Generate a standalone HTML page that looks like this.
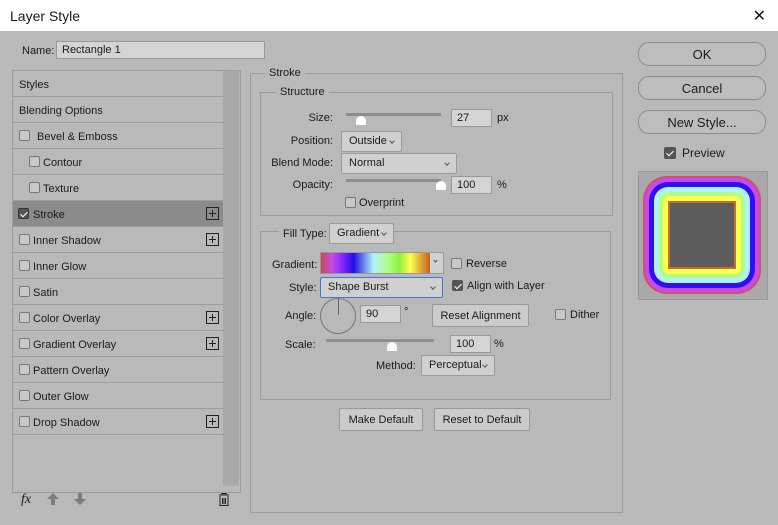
<!DOCTYPE html>
<html><head><style>
*{box-sizing:border-box;margin:0;padding:0}
body{width:778px;height:525px;background:#b9b9b9;font-family:"Liberation Sans",sans-serif;font-size:11px;color:#1a1a1a;position:relative;overflow:hidden}
.a{position:absolute}
.title{left:0;top:0;width:778px;height:31px;background:#fff;font-size:14px;padding:8px 0 0 10px}
.inp{background:#d4d4d4;border:1px solid #999;padding:2px 5px;height:18px}
.dd{background:#d0d0d0;border:1px solid #9a9a9a;border-radius:2px;padding:3px 7px;height:21px}
.dd:after{content:"";position:absolute;right:7px;top:7px;width:3px;height:3px;border-right:1px solid #555;border-bottom:1px solid #555;transform:rotate(45deg)}
.cb{width:11px;height:11px;border:1px solid #777;border-radius:2px;background:#c8c8c8}
.cbc{background:#555;border-color:#555}
.cbc:after{content:"";position:absolute;left:3px;top:1px;width:3px;height:6px;border-right:1.5px solid #fff;border-bottom:1.5px solid #fff;transform:rotate(45deg)}
.item{left:13px;width:210px;height:26px;border-bottom:1px solid #9e9e9e;padding:8px 0 0 6px}
.plus{right:4px;top:6px;width:13px;height:13px;border:1px solid #222}
.plus:before{content:"";position:absolute;left:2px;top:5px;width:7px;height:1px;background:#222}
.plus:after{content:"";position:absolute;left:5px;top:2px;width:1px;height:7px;background:#222}
.grp{border:1px solid #9c9c9c}
.lg{background:#b9b9b9;padding:0 4px}
.btn{background:#cbcbcb;border:1px solid #999;border-radius:2px;text-align:center;padding-top:5px;height:23px}
.rb{border:1px solid #8a8a8a;border-radius:11px;text-align:center;font-size:13px;padding-top:4px;height:24px;width:128px;left:638px;background:#bdbdbd}
.sl{height:3px;background:#8e8e8e}
.th{width:10px;height:9px;background:#fff;border-radius:5px 5px 1px 1px}
.r{text-align:right}
</style></head><body>
<div class="a title">Layer Style</div>
<div class="a" style="right:12px;top:6px;font-size:16px">✕</div>
<div class="a" style="left:22px;top:45px">Name:</div>
<div class="a inp" style="left:56px;top:41px;width:209px">Rectangle 1</div>

<div class="a grp" style="left:12px;top:70px;width:229px;height:423px"></div>
<div class="a" style="left:223px;top:71px;width:16px;height:415px;background:#a9a9a9"></div>
<div class="a item" style="top:71px">Styles</div>
<div class="a item" style="top:97px">Blending Options</div>
<div class="a item" style="top:123px;padding-left:24px"><div class="a cb" style="left:6px;top:7px"></div>Bevel &amp; Emboss</div>
<div class="a item" style="top:149px;padding-left:30px"><div class="a cb" style="left:16px;top:7px"></div>Contour</div>
<div class="a item" style="top:175px;padding-left:30px"><div class="a cb" style="left:16px;top:7px"></div>Texture</div>
<div class="a item" style="top:201px;padding-left:20px;background:#8b8b8b"><div class="a cb cbc" style="left:5px;top:7px;border-color:#333"></div>Stroke<div class="a plus"></div></div>
<div class="a item" style="top:227px;padding-left:20px"><div class="a cb" style="left:6px;top:7px"></div>Inner Shadow<div class="a plus"></div></div>
<div class="a item" style="top:253px;padding-left:20px"><div class="a cb" style="left:6px;top:7px"></div>Inner Glow</div>
<div class="a item" style="top:279px;padding-left:20px"><div class="a cb" style="left:6px;top:7px"></div>Satin</div>
<div class="a item" style="top:305px;padding-left:20px"><div class="a cb" style="left:6px;top:7px"></div>Color Overlay<div class="a plus"></div></div>
<div class="a item" style="top:331px;padding-left:20px"><div class="a cb" style="left:6px;top:7px"></div>Gradient Overlay<div class="a plus"></div></div>
<div class="a item" style="top:357px;padding-left:20px"><div class="a cb" style="left:6px;top:7px"></div>Pattern Overlay</div>
<div class="a item" style="top:383px;padding-left:20px"><div class="a cb" style="left:6px;top:7px"></div>Outer Glow</div>
<div class="a item" style="top:409px;padding-left:20px"><div class="a cb" style="left:6px;top:7px"></div>Drop Shadow<div class="a plus"></div></div>
<div class="a" style="left:21px;top:492px;font-size:14px;font-style:italic;font-family:'Liberation Serif',serif">fx</div>
<svg class="a" style="left:47px;top:493px" width="12" height="12"><path d="M6 0L12 6H8V12H4V6H0Z" fill="#7d7d7d"/></svg>
<svg class="a" style="left:74px;top:493px" width="12" height="12"><path d="M6 12L12 6H8V0H4V6H0Z" fill="#7d7d7d"/></svg>
<svg class="a" style="left:218px;top:493px" width="12" height="13"><path d="M1 2H11M4 2V0.5H8V2M2 3V12.5H10V3M4.5 5V11M6 5V11M7.5 5V11" stroke="#222" fill="none"/></svg>

<div class="a grp" style="left:250px;top:73px;width:373px;height:440px"></div>
<div class="a lg" style="left:265px;top:67px">Stroke</div>
<div class="a grp" style="left:260px;top:92px;width:353px;height:124px"></div>
<div class="a lg" style="left:276px;top:86px">Structure</div>
<div class="a r" style="left:300px;top:112px;width:33px">Size:</div>
<div class="a sl" style="left:346px;top:113px;width:95px"></div>
<div class="a th" style="left:356px;top:116px"></div>
<div class="a inp" style="left:451px;top:109px;width:41px">27</div>
<div class="a" style="left:497px;top:112px">px</div>
<div class="a r" style="left:280px;top:135px;width:53px">Position:</div>
<div class="a dd" style="left:341px;top:131px;width:61px">Outside</div>
<div class="a r" style="left:270px;top:157px;width:63px">Blend Mode:</div>
<div class="a dd" style="left:341px;top:153px;width:116px">Normal</div>
<div class="a r" style="left:280px;top:179px;width:53px">Opacity:</div>
<div class="a sl" style="left:346px;top:179px;width:95px"></div>
<div class="a th" style="left:436px;top:181px"></div>
<div class="a inp" style="left:451px;top:176px;width:41px">100</div>
<div class="a" style="left:497px;top:179px">%</div>
<div class="a cb" style="left:345px;top:197px"></div>
<div class="a" style="left:359px;top:197px">Overprint</div>

<div class="a grp" style="left:260px;top:231px;width:351px;height:169px"></div>
<div class="a lg" style="left:279px;top:228px">Fill Type:</div>
<div class="a dd" style="left:329px;top:223px;width:65px">Gradient</div>
<div class="a" style="left:272px;top:259px">Gradient:</div>
<div class="a" style="left:320px;top:252px;width:124px;height:22px;border:1px solid #999;background:#d0d0d0"><div class="a" style="left:0;top:0;width:109px;height:20px;background:linear-gradient(90deg,#c04a50,#c84ae8 10%,#7020ff 22%,#2010e0 30%,#b0f0ff 48%,#b0ff80 62%,#90f040 72%,#ffff50 82%,#c06020)"></div></div>
<div class="a" style="left:434px;top:259px;width:3px;height:3px;border-right:1px solid #555;border-bottom:1px solid #555;transform:rotate(45deg)"></div>
<div class="a cb" style="left:451px;top:258px"></div>
<div class="a" style="left:466px;top:258px">Reverse</div>
<div class="a" style="left:289px;top:282px">Style:</div>
<div class="a dd" style="left:320px;top:277px;width:123px;border-color:#3d7bd0">Shape Burst</div>
<div class="a cb cbc" style="left:452px;top:280px"></div>
<div class="a" style="left:467px;top:280px">Align with Layer</div>
<div class="a" style="left:285px;top:310px">Angle:</div>
<div class="a" style="left:320px;top:298px;width:36px;height:36px;border:1px solid #777;border-radius:50%"></div>
<div class="a" style="left:338px;top:299px;width:1px;height:16px;background:#666"></div>
<div class="a inp" style="left:360px;top:305px;width:41px">90</div>
<div class="a" style="left:404px;top:306px">°</div>
<div class="a btn" style="left:432px;top:304px;width:97px">Reset Alignment</div>
<div class="a cb" style="left:555px;top:309px"></div>
<div class="a" style="left:570px;top:309px">Dither</div>
<div class="a" style="left:285px;top:339px">Scale:</div>
<div class="a sl" style="left:326px;top:339px;width:108px"></div>
<div class="a th" style="left:387px;top:342px"></div>
<div class="a inp" style="left:450px;top:335px;width:41px">100</div>
<div class="a" style="left:494px;top:338px">%</div>
<div class="a" style="left:376px;top:360px">Method:</div>
<div class="a dd" style="left:421px;top:355px;width:74px">Perceptual</div>
<div class="a btn" style="left:339px;top:408px;width:84px">Make Default</div>
<div class="a btn" style="left:434px;top:408px;width:96px">Reset to Default</div>

<div class="a rb" style="top:42px">OK</div>
<div class="a rb" style="top:76px">Cancel</div>
<div class="a rb" style="top:110px">New Style...</div>
<div class="a cb cbc" style="left:664px;top:147px;width:12px;height:12px"></div>
<div class="a" style="left:682px;top:146px;font-size:12px">Preview</div>
<div class="a" style="left:638px;top:171px;width:130px;height:129px;background:#a9a9a9;border:1px solid #9a9a9a"></div>
<div class="a" style="left:643px;top:176px;width:118px;height:118px;border-radius:24px;background:#d05070"></div>
<div class="a" style="left:645px;top:178px;width:114px;height:114px;border-radius:22px;background:#c84ae8"></div>
<div class="a" style="left:649px;top:182px;width:106px;height:106px;border-radius:19px;background:#3010f0"></div>
<div class="a" style="left:654px;top:187px;width:96px;height:96px;border-radius:14px;background:#b0f0ff"></div>
<div class="a" style="left:659px;top:192px;width:86px;height:86px;border-radius:10px;background:#b0ff80"></div>
<div class="a" style="left:663px;top:196px;width:78px;height:78px;border-radius:6px;background:#ffff50"></div>
<div class="a" style="left:668px;top:201px;width:68px;height:68px;background:#c07030"></div>
<div class="a" style="left:670px;top:203px;width:64px;height:64px;background:#5c5c5c"></div>
</body></html>
